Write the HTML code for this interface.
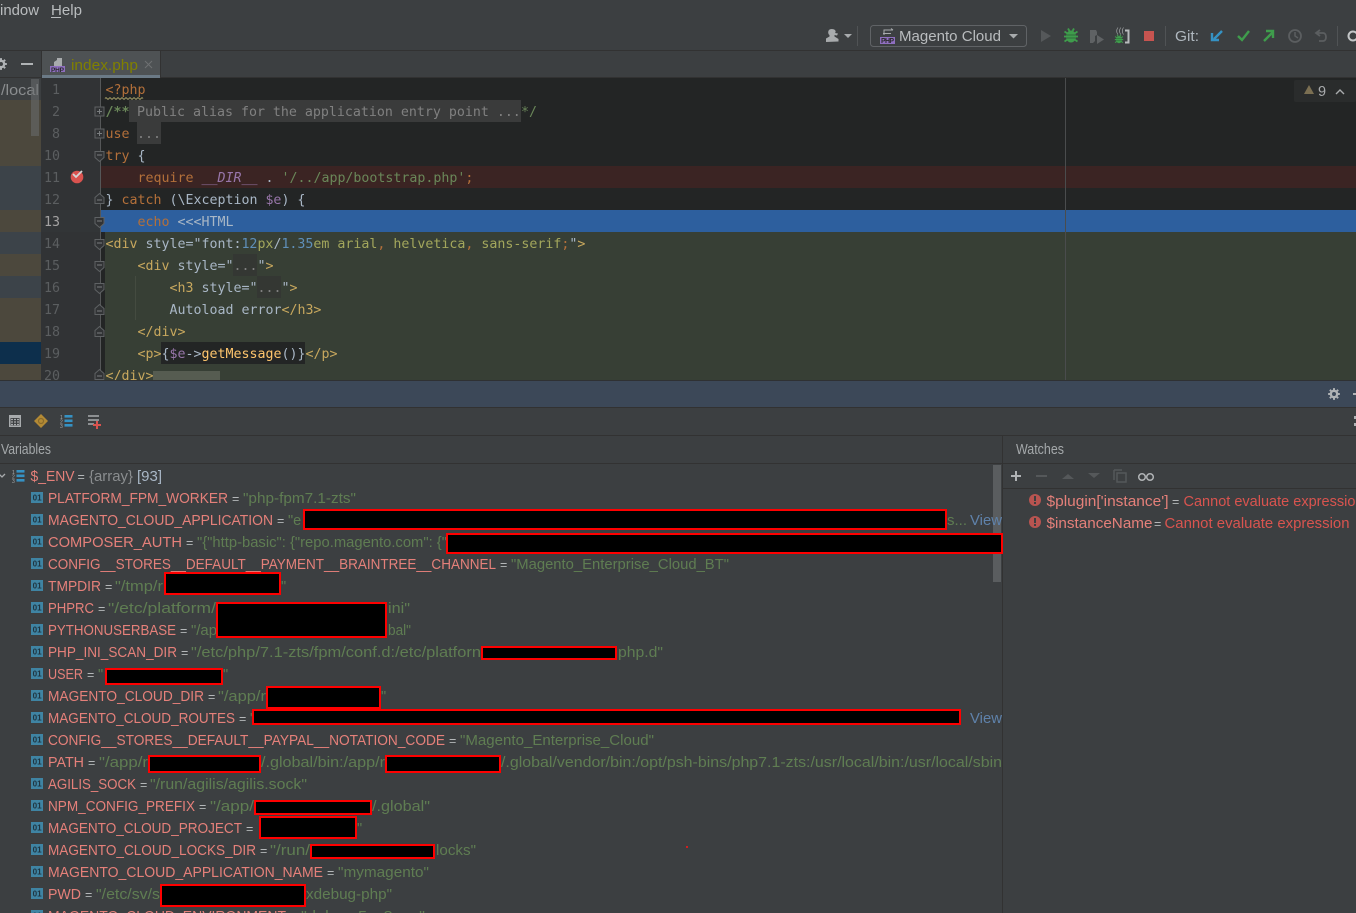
<!DOCTYPE html>
<html><head><meta charset="utf-8"><style>
html,body{margin:0;padding:0;background:#3c3f41;width:1356px;height:913px;overflow:hidden}
svg{display:block}
text{white-space:pre}
.u{font-family:"Liberation Sans",sans-serif;font-size:14.5px}
.m{font-family:"DejaVu Sans Mono","Liberation Mono",monospace;font-size:13.29px;fill:#a9b7c6}
.n{fill:#e5807a}.e{fill:#b4b7b9;font-size:12.5px}.v{fill:#5f7d52}.g{fill:#8a8d8f}.l{fill:#5f82ab}
.o{fill:#b4703a}.t{fill:#c8a85e}.y{fill:#a9b7c6}.p{fill:#9876aa}.s{fill:#6a8759}.b{fill:#5f8fb8}.c{fill:#5d6a5d}.h{fill:#a3a75c}
.ln{font-family:"DejaVu Sans Mono",monospace;font-size:13.29px;fill:#5b5e60;text-anchor:end}
.ic{font-family:"Liberation Sans",sans-serif;font-size:8px;font-weight:bold;fill:#1f3440}
.d{font-family:"Liberation Sans",sans-serif;font-size:5px;fill:#a8abad}
</style></head><body>
<svg width="1356" height="913" viewBox="0 0 1356 913" xmlns="http://www.w3.org/2000/svg">
<defs>
<g id="i01"><rect width="12" height="11" fill="#3f84a3"/><text class="ic" x="1.6" y="8.4" textLength="9" lengthAdjust="spacingAndGlyphs">01</text></g>
<g id="list"><text class="d" x="0" y="4">1</text><text class="d" x="0" y="8.500">2</text><text class="d" x="0" y="13">3</text><rect x="4.500" y="0" width="8" height="2.600" fill="#3592c4"/><rect x="4.500" y="4.500" width="8" height="2.600" fill="#3592c4"/><rect x="4.500" y="9" width="8" height="2.600" fill="#3592c4"/></g>
<g id="bug"><path d="M-6.500-4l3 2M6.500-4l-3 2M-7 1h3M7 1h-3M-6.500 6l3-2M6.500 6l-3-2M-3-7l1.500 2.500M3-7l-1.500 2.500" stroke="#3f9c4c" stroke-width="1.800" fill="none"/><ellipse cx="0" cy="1" rx="5" ry="6" fill="#3f9c4c"/><path d="M-4.500-.5h9M-4.500 2.500h9" stroke="#2f6b3a" stroke-width="1"/></g>
<g id="fm"><rect x="-4.500" y="-4.500" width="9" height="9" fill="#3c3f41" stroke="#5a5d5f"/><path d="M-2.500 0h5" stroke="#6d7072"/></g>
<g id="fp"><rect x="-4.500" y="-4.500" width="9" height="9" fill="#313335" stroke="#5f6264"/><path d="M-2.500 0h5M0-2.500v5" stroke="#7a7d7f"/></g>
<g id="fd"><path d="M-4.500-4.500h9v6l-4.500 4-4.500-4z" fill="#313335" stroke="#5f6264"/><path d="M-2.500-1h5" stroke="#7a7d7f"/></g>
<g id="fu"><path d="M-4.500 4.500h9v-6l-4.500-4-4.500 4z" fill="#313335" stroke="#5f6264"/><path d="M-2.500 1h5" stroke="#7a7d7f"/></g>
<g id="gear"><circle r="3.500" fill="none" stroke="#b0b3b5" stroke-width="2.600"/><path d="M0-6.500v2.500M0 6.500v-2.500M-6.500 0h2.500M6.500 0h-2.500M-4.600-4.600l1.800 1.800M4.600 4.600l-1.800-1.800M-4.600 4.600l1.800-1.800M4.600-4.600l-1.800 1.800" stroke="#b0b3b5" stroke-width="2.200"/></g>
</defs>

<!-- window chrome -->
<rect width="1356" height="913" fill="#3c3f41"/>
<rect y="50" width="1356" height="1" fill="#323232"/>
<text class="u" x="0" y="15" fill="#b9bcbe" textLength="39" lengthAdjust="spacingAndGlyphs">indow</text>
<text class="u" x="51" y="15" fill="#b9bcbe" textLength="31" lengthAdjust="spacingAndGlyphs">Help</text>
<rect x="51" y="17" width="10" height="1" fill="#b9bcbe"/>

<!-- toolbar -->
<path d="M826 42v-3.500l3.500-2v-1.500c-2-1-2-6 2-6s5 2.500 3.500 4l3 .5-1 2-2.500-.5v1.500l4 2.500v2.500z" fill="#a8abad"/><path d="M844 34h8l-4 4z" fill="#a8abad"/>
<rect x="857" y="26" width="1" height="20" fill="#505355"/>
<rect x="870.500" y="25.500" width="156" height="21" rx="3" fill="none" stroke="#606366"/>
<path d="M884 35v-5h9M893 30l-2-1.500M883 33.500h8" stroke="#a8abad" fill="none"/><rect x="880" y="37" width="15" height="7" fill="#8f6fc0"/>
<text x="881" y="43" font-family="Liberation Sans" font-size="7" font-weight="bold" fill="#2b2b2b" textLength="13">PHP</text>
<text class="u" x="899" y="41" fill="#b9bcbe" textLength="102" lengthAdjust="spacingAndGlyphs">Magento Cloud</text>
<path d="M1009 34h9l-4.500 4.500z" fill="#a8abad"/>
<path d="M1041 30l10 6-10 6z" fill="#55585a"/>
<use href="#bug" x="1071" y="35.500"/>
<path d="M1090 30h6l1 2v3l-2 1v5l-2 2h-3z" fill="#5f6264"/><path d="M1097 35l7 4.500-7 4.500z" fill="#5f6264"/>
<use href="#bug" transform="translate(1119,39) scale(.6)"/><path d="M1125 30.500h3.500v12h-3.500" fill="none" stroke="#b8bbbd" stroke-width="2"/><text x="1116" y="33" font-family="Liberation Sans" font-size="7" fill="#b0b3b5" textLength="8">(((</text>
<rect x="1144" y="31" width="10" height="10" fill="#c75450"/>
<rect x="1165" y="26" width="1" height="20" fill="#505355"/>
<text class="u" x="1175" y="41" fill="#b0b8bf" textLength="24" lengthAdjust="spacingAndGlyphs">Git:</text>
<path d="M1222 31l-8 8M1212 33v7h7" fill="none" stroke="#3592c4" stroke-width="2.400"/>
<path d="M1238 36l4 4 7-9" fill="none" stroke="#3f9c4c" stroke-width="2.400"/>
<path d="M1264 41l9-9M1266 31h7v7" fill="none" stroke="#3f9c4c" stroke-width="2.400"/>
<circle cx="1295" cy="36" r="6" fill="none" stroke="#5b5e60" stroke-width="1.800"/><path d="M1295 32v4l3 2" fill="none" stroke="#5b5e60" stroke-width="1.500"/>
<path d="M1320 30l-4 3 4 3M1317 33h6c4 0 4 8 0 8h-4" fill="none" stroke="#5b5e60" stroke-width="1.800"/>
<rect x="1337" y="26" width="1" height="20" fill="#505355"/>
<circle cx="1353" cy="36" r="4.500" fill="none" stroke="#c4c6c8" stroke-width="2"/>

<!-- tab strip -->
<rect y="77" width="1356" height="1" fill="#323232"/>
<use href="#gear" transform="translate(1,64) scale(.9)"/>
<rect x="21" y="63" width="12" height="2" fill="#b0b3b5"/>
<rect x="41" y="51" width="119" height="27" fill="#4e5254"/>
<rect x="41" y="75" width="119" height="3" fill="#6b7a86"/>
<rect x="41" y="51" width="1" height="27" fill="#323232"/><rect x="160" y="51" width="1" height="27" fill="#323232"/>
<path d="M54 66v-4l3-2v-2h5v8z" fill="#a8abad"/><rect x="50" y="66" width="15" height="6" fill="#8f6fc0"/>
<text x="51" y="72" font-family="Liberation Sans" font-size="6.500" font-weight="bold" fill="#2b2b2b" textLength="13">PHP</text>
<text class="u" x="71" y="70" fill="#808000" textLength="67" lengthAdjust="spacingAndGlyphs">index.php</text>
<path d="M145 61l7 7M152 61l-7 7" stroke="#6e7072" stroke-width="1"/>

<!-- project panel -->
<rect y="78" width="41" height="302" fill="#3c3f41"/>
<text class="u" x="1" y="95" fill="#8a8d8f" textLength="38" lengthAdjust="spacingAndGlyphs">/local</text>
<rect y="100" width="41" height="66" fill="#4c483d"/>
<rect y="166" width="41" height="44" fill="#3c4349"/>
<rect y="210" width="41" height="22" fill="#4c483d"/>
<rect y="232" width="41" height="22" fill="#3c4349"/>
<rect y="254" width="41" height="22" fill="#4c483d"/>
<rect y="276" width="41" height="22" fill="#3c4349"/>
<rect y="298" width="41" height="44" fill="#4c483d"/>
<rect y="342" width="41" height="22" fill="#0d2f4c"/>
<rect y="364" width="41" height="16" fill="#4c483d"/>
<rect x="31" y="79" width="8" height="57" fill="#6a6d6f" fill-opacity=".55"/>

<!-- gutter + editor -->
<rect x="41" y="78" width="59" height="302" fill="#313335"/>
<rect x="100" y="78" width="1256" height="302" fill="#232525"/>
<rect x="100" y="166" width="1256" height="22" fill="#3b2423"/>
<rect x="105" y="232" width="1251" height="148" fill="#373f35"/>
<rect x="100" y="210" width="1256" height="22" fill="#2d5f9e"/>
<rect x="41" y="210" width="59" height="22" fill="#323537"/>
<rect x="100" y="78" width="1" height="302" fill="#555758"/>
<rect x="1065" y="78" width="1" height="302" fill="#4a4c4d"/>

<!-- line numbers -->
<text class="ln" x="60" y="94">1</text><text class="ln" x="60" y="116">2</text><text class="ln" x="60" y="138">8</text>
<text class="ln" x="60" y="160">10</text><text class="ln" x="60" y="182">11</text><text class="ln" x="60" y="204">12</text>
<text class="ln" x="60" y="226" style="fill:#a4a3a3">13</text><text class="ln" x="60" y="248">14</text><text class="ln" x="60" y="270">15</text>
<text class="ln" x="60" y="292">16</text><text class="ln" x="60" y="314">17</text><text class="ln" x="60" y="336">18</text>
<text class="ln" x="60" y="358">19</text><text class="ln" x="60" y="380">20</text>

<!-- fold markers -->
<use href="#fp" x="99.500" y="111.500"/><use href="#fp" x="99.500" y="133.500"/><use href="#fd" x="99.500" y="156"/><use href="#fu" x="99.500" y="199"/>
<use href="#fd" x="99.500" y="222"/><use href="#fd" x="99.500" y="244"/><use href="#fd" x="99.500" y="266"/><use href="#fd" x="99.500" y="288"/>
<use href="#fu" x="99.500" y="310"/><use href="#fu" x="99.500" y="332"/><use href="#fu" x="99.500" y="375"/>

<!-- breakpoint -->
<circle cx="77" cy="177" r="6.300" fill="#d9534f"/><path d="M73 174l3 3 6-6" fill="none" stroke="#d5d5d5" stroke-width="1.800"/>

<!-- code fold backgrounds -->
<rect x="129" y="100" width="392" height="22" fill="#3a3b3b"/>
<rect x="137" y="122" width="24" height="22" fill="#3a3b3b"/>
<rect x="233" y="254" width="24" height="22" fill="#343733"/>
<rect x="257" y="276" width="24" height="22" fill="#343733"/>
<rect x="161" y="342" width="144" height="22" fill="#232525"/>
<rect x="153" y="371" width="67" height="9" fill="#565c51"/>
<rect x="135" y="276" width="1" height="44" fill="#444b40"/>
<path d="M105 98.500q1-1.500 2 0t2 0 2 0 2 0 2 0 2 0 2 0 2 0 2 0 2 0 2 0 2 0 2 0 2 0 2 0 2 0 2 0 2 0 2 0" fill="none" stroke="#a8a36a" stroke-width="1"/>

<!-- code -->
<text class="m" x="105.500" y="94"><tspan class="o">&lt;?php</tspan></text>
<text class="m" x="105.500" y="116"><tspan class="s" font-weight="bold">/**</tspan></text>
<text class="m" x="137" y="116" style="fill:#808080">Public alias for the application entry point ...</text>
<text class="m" x="521" y="116"><tspan class="s">*/</tspan></text>
<text class="m" x="105.500" y="138"><tspan class="o">use</tspan></text><text class="m" x="137" y="138" style="fill:#808080">...</text>
<text class="m" x="105.500" y="160"><tspan class="o">try</tspan> {</text>
<text class="m" x="137.500" y="182"><tspan class="o">require</tspan> <tspan class="p" font-style="italic">__DIR__</tspan> . <tspan class="s">'/../app/bootstrap.php'</tspan><tspan class="o">;</tspan></text>
<text class="m" x="105.500" y="204">} <tspan class="o">catch</tspan> (\Exception <tspan class="p">$e</tspan>) {</text>
<text class="m" x="137.500" y="226"><tspan class="o">echo</tspan> &lt;&lt;&lt;HTML</text>
<text class="m" x="105.500" y="248"><tspan class="t">&lt;div</tspan> <tspan class="y">style="font:</tspan><tspan class="b">12</tspan><tspan class="h">px</tspan><tspan class="y">/</tspan><tspan class="b">1.35</tspan><tspan class="h">em arial</tspan><tspan class="o">,</tspan><tspan class="h"> helvetica</tspan><tspan class="o">,</tspan><tspan class="h"> sans-serif</tspan><tspan class="o">;</tspan><tspan class="y">"</tspan><tspan class="t">&gt;</tspan></text>
<text class="m" x="137.500" y="270"><tspan class="t">&lt;div</tspan> <tspan class="y">style="</tspan><tspan style="fill:#808080">...</tspan><tspan class="y">"</tspan><tspan class="t">&gt;</tspan></text>
<text class="m" x="169.500" y="292"><tspan class="t">&lt;h3</tspan> <tspan class="y">style="</tspan><tspan style="fill:#808080">...</tspan><tspan class="y">"</tspan><tspan class="t">&gt;</tspan></text>
<text class="m" x="169.500" y="314">Autoload error<tspan class="t">&lt;/h3&gt;</tspan></text>
<text class="m" x="137.500" y="336"><tspan class="t">&lt;/div&gt;</tspan></text>
<text class="m" x="137.500" y="358"><tspan class="t">&lt;p&gt;</tspan>{<tspan class="p">$e</tspan>-&gt;<tspan style="fill:#ffc66d">getMessage</tspan>()}<tspan class="t">&lt;/p&gt;</tspan></text>
<text class="m" x="105.500" y="380"><tspan class="t">&lt;/div&gt;</tspan></text>

<!-- inspection widget -->
<rect x="1294" y="80" width="62" height="22" rx="2" fill="#2a2c2c"/>
<path d="M1309 85l5 9h-10z" fill="#7b6f52"/>
<text class="u" x="1318" y="96" fill="#a9abad" font-size="13">9</text>
<path d="M1336 94l4-4 4 4" fill="none" stroke="#a9abad" stroke-width="1.400"/>

<!-- debug title bar -->
<rect y="380" width="1356" height="1" fill="#2f3133"/>
<rect y="381" width="1356" height="26" fill="#3c4858"/>
<rect y="407" width="1356" height="1" fill="#323232"/>
<use href="#gear" transform="translate(1334,394) scale(.9)"/>
<rect x="1353" y="393" width="3" height="2" fill="#b0b3b5"/>

<!-- debug toolbar -->
<rect y="435" width="1356" height="1" fill="#323232"/>
<rect x="9" y="415" width="12" height="12" fill="#a8abad"/><rect x="10.500" y="418" width="9" height="7.500" fill="#3c3f41"/><path d="M11 419.500h2M14 419.500h2M17 419.500h2M11 422h2M14 422h2M17 422h2M11 424.500h2M14 424.500h2M17 424.500h2" stroke="#a8abad" stroke-width="1.200"/>
<path d="M41 414l7 7-7 7-7-7z" fill="#b38a35"/><circle cx="41" cy="421" r="2.500" fill="none" stroke="#8a6b2a" stroke-width="1.200"/>
<use href="#list" x="60" y="415"/>
<path d="M88 416h11M88 420h11M88 424h6" stroke="#a8abad" stroke-width="1.500"/><path d="M97 421v8M93 425h8" stroke="#d9534f" stroke-width="2"/>
<rect x="1354" y="416" width="2" height="3" fill="#b0b3b5"/><rect x="1354" y="423" width="2" height="3" fill="#b0b3b5"/>

<!-- panels -->
<text class="u" x="1" y="454" fill="#a4a8aa" font-size="13" textLength="50" lengthAdjust="spacingAndGlyphs">Variables</text>
<text class="u" x="1016" y="454" fill="#a4a8aa" font-size="13" textLength="48" lengthAdjust="spacingAndGlyphs">Watches</text>
<rect y="463" width="1356" height="1" fill="#323232"/>
<rect x="1002" y="436" width="1" height="477" fill="#323232"/>
<rect x="993" y="465" width="8" height="117" fill="#5a5d5f"/>

<!-- watches -->
<path d="M1016 471v10M1011 476h10" stroke="#b0b3b5" stroke-width="2"/>
<rect x="1036" y="475" width="11" height="2" fill="#55585a"/>
<path d="M1062 479l6-5 6 5z" fill="#55585a"/><path d="M1088 473l6 5 6-5z" fill="#55585a"/>
<path d="M1114 470h8M1114 470v10" stroke="#55585a" stroke-width="1.500"/><rect x="1117" y="473" width="9" height="9" fill="none" stroke="#55585a" stroke-width="1.500"/>
<circle cx="1142" cy="477" r="3.300" fill="none" stroke="#b0b3b5" stroke-width="1.500"/><circle cx="1150" cy="477" r="3.300" fill="none" stroke="#b0b3b5" stroke-width="1.500"/>
<rect x="1003" y="488" width="353" height="1" fill="#323232"/>
<circle cx="1035" cy="500" r="6" fill="#b75450"/><rect x="1034" y="496" width="2" height="5" fill="#3c3f41"/><rect x="1034" y="502" width="2" height="2" fill="#3c3f41"/>
<circle cx="1035" cy="522" r="6" fill="#b75450"/><rect x="1034" y="518" width="2" height="5" fill="#3c3f41"/><rect x="1034" y="524" width="2" height="2" fill="#3c3f41"/>
<text class="u n" x="1046.500" y="506" textLength="122" lengthAdjust="spacingAndGlyphs">$plugin['instance']</text>
<text class="u e" x="1172" y="506">=</text>
<text class="u" x="1183.500" y="506" fill="#d9544f" textLength="180" lengthAdjust="spacingAndGlyphs">Cannot evaluate expression</text>
<text class="u n" x="1046.500" y="528" textLength="106" lengthAdjust="spacingAndGlyphs">$instanceName</text>
<text class="u e" x="1154" y="528">=</text>
<text class="u" x="1164.500" y="528" fill="#d9544f" textLength="185" lengthAdjust="spacingAndGlyphs">Cannot evaluate expression</text>

<!-- variables tree -->
<path d="M-1 474l3 3 3-3" fill="none" stroke="#a8abad" stroke-width="1.300"/>
<use href="#list" x="12" y="470"/>
<text class="u n" x="30.500" y="481" textLength="44" lengthAdjust="spacingAndGlyphs">$_ENV</text>
<text class="u e" x="77.500" y="481">=</text>
<text class="u g" x="89" y="481" textLength="44" lengthAdjust="spacingAndGlyphs">{array}</text>
<text class="u" x="137" y="481" fill="#a9b7c6" textLength="25" lengthAdjust="spacingAndGlyphs">[93]</text>

<use href="#i01" x="31" y="492"/><text class="u n" x="48" y="503" textLength="180" lengthAdjust="spacingAndGlyphs">PLATFORM_FPM_WORKER</text><text class="u e" x="232" y="503">=</text><text class="u v" x="243" y="503" textLength="113" lengthAdjust="spacingAndGlyphs">"php-fpm7.1-zts"</text>

<use href="#i01" x="31" y="514"/><text class="u n" x="48" y="525" textLength="225" lengthAdjust="spacingAndGlyphs">MAGENTO_CLOUD_APPLICATION</text><text class="u e" x="277" y="525">=</text><text class="u v" x="288" y="525">"e</text><text class="u v" x="947" y="525" textLength="20" lengthAdjust="spacingAndGlyphs">s...</text><text class="u l" x="970" y="525" textLength="32" lengthAdjust="spacingAndGlyphs">View</text>

<use href="#i01" x="31" y="536"/><text class="u n" x="48" y="547" textLength="134" lengthAdjust="spacingAndGlyphs">COMPOSER_AUTH</text><text class="u e" x="186" y="547">=</text><text class="u v" x="197" y="547" textLength="250" lengthAdjust="spacingAndGlyphs">"{"http-basic": {"repo.magento.com": {"</text>

<use href="#i01" x="31" y="558"/><text class="u n" x="48" y="569" textLength="448" lengthAdjust="spacingAndGlyphs">CONFIG__STORES__DEFAULT__PAYMENT__BRAINTREE__CHANNEL</text><text class="u e" x="500" y="569">=</text><text class="u v" x="511" y="569" textLength="218" lengthAdjust="spacingAndGlyphs">"Magento_Enterprise_Cloud_BT"</text>

<use href="#i01" x="31" y="580"/><text class="u n" x="48" y="591" textLength="53" lengthAdjust="spacingAndGlyphs">TMPDIR</text><text class="u e" x="105" y="591">=</text><text class="u v" x="115" y="591" textLength="48" lengthAdjust="spacingAndGlyphs">"/tmp/r</text><text class="u v" x="281" y="591">"</text>

<use href="#i01" x="31" y="602"/><text class="u n" x="48" y="613" textLength="46" lengthAdjust="spacingAndGlyphs">PHPRC</text><text class="u e" x="98" y="613">=</text><text class="u v" x="108" y="613" textLength="108" lengthAdjust="spacingAndGlyphs">"/etc/platform/</text><text class="u v" x="388" y="613" textLength="22" lengthAdjust="spacingAndGlyphs">ini"</text>

<use href="#i01" x="31" y="624"/><text class="u n" x="48" y="635" textLength="128" lengthAdjust="spacingAndGlyphs">PYTHONUSERBASE</text><text class="u e" x="180" y="635">=</text><text class="u v" x="191" y="635" textLength="26" lengthAdjust="spacingAndGlyphs">"/ap</text><text class="u v" x="388" y="635" textLength="23" lengthAdjust="spacingAndGlyphs">bal"</text>

<use href="#i01" x="31" y="646"/><text class="u n" x="48" y="657" textLength="129" lengthAdjust="spacingAndGlyphs">PHP_INI_SCAN_DIR</text><text class="u e" x="181" y="657">=</text><text class="u v" x="191" y="657" textLength="290" lengthAdjust="spacingAndGlyphs">"/etc/php/7.1-zts/fpm/conf.d:/etc/platforn</text><text class="u v" x="618" y="657" textLength="45" lengthAdjust="spacingAndGlyphs">php.d"</text>

<use href="#i01" x="31" y="668"/><text class="u n" x="48" y="679" textLength="35" lengthAdjust="spacingAndGlyphs">USER</text><text class="u e" x="87" y="679">=</text><text class="u v" x="98" y="679">"</text><text class="u v" x="223" y="679">"</text>

<use href="#i01" x="31" y="690"/><text class="u n" x="48" y="701" textLength="156" lengthAdjust="spacingAndGlyphs">MAGENTO_CLOUD_DIR</text><text class="u e" x="208" y="701">=</text><text class="u v" x="218" y="701" textLength="48" lengthAdjust="spacingAndGlyphs">"/app/r</text><text class="u v" x="381" y="701">"</text>

<use href="#i01" x="31" y="712"/><text class="u n" x="48" y="723" textLength="187" lengthAdjust="spacingAndGlyphs">MAGENTO_CLOUD_ROUTES</text><text class="u e" x="239" y="723">=</text><text class="u v" x="250" y="723">"</text><text class="u l" x="970" y="723" textLength="32" lengthAdjust="spacingAndGlyphs">View</text>

<use href="#i01" x="31" y="734"/><text class="u n" x="48" y="745" textLength="397" lengthAdjust="spacingAndGlyphs">CONFIG__STORES__DEFAULT__PAYPAL__NOTATION_CODE</text><text class="u e" x="449" y="745">=</text><text class="u v" x="460" y="745" textLength="194" lengthAdjust="spacingAndGlyphs">"Magento_Enterprise_Cloud"</text>

<use href="#i01" x="31" y="756"/><text class="u n" x="48" y="767" textLength="36" lengthAdjust="spacingAndGlyphs">PATH</text><text class="u e" x="88" y="767">=</text><text class="u v" x="99" y="767" textLength="49" lengthAdjust="spacingAndGlyphs">"/app/r</text><text class="u v" x="261" y="767" textLength="124" lengthAdjust="spacingAndGlyphs">/.global/bin:/app/r</text><text class="u v" x="501" y="767" textLength="501" lengthAdjust="spacingAndGlyphs">/.global/vendor/bin:/opt/psh-bins/php7.1-zts:/usr/local/bin:/usr/local/sbin</text>

<use href="#i01" x="31" y="778"/><text class="u n" x="48" y="789" textLength="88" lengthAdjust="spacingAndGlyphs">AGILIS_SOCK</text><text class="u e" x="140" y="789">=</text><text class="u v" x="150" y="789" textLength="157" lengthAdjust="spacingAndGlyphs">"/run/agilis/agilis.sock"</text>

<use href="#i01" x="31" y="800"/><text class="u n" x="48" y="811" textLength="147" lengthAdjust="spacingAndGlyphs">NPM_CONFIG_PREFIX</text><text class="u e" x="199" y="811">=</text><text class="u v" x="210" y="811" textLength="44" lengthAdjust="spacingAndGlyphs">"/app/</text><text class="u v" x="372" y="811" textLength="58" lengthAdjust="spacingAndGlyphs">/.global"</text>

<use href="#i01" x="31" y="822"/><text class="u n" x="48" y="833" textLength="194" lengthAdjust="spacingAndGlyphs">MAGENTO_CLOUD_PROJECT</text><text class="u e" x="246" y="833">=</text><text class="u v" x="357" y="833">"</text>

<use href="#i01" x="31" y="844"/><text class="u n" x="48" y="855" textLength="208" lengthAdjust="spacingAndGlyphs">MAGENTO_CLOUD_LOCKS_DIR</text><text class="u e" x="260" y="855">=</text><text class="u v" x="270" y="855" textLength="40" lengthAdjust="spacingAndGlyphs">"/run/</text><text class="u v" x="436" y="855" textLength="40" lengthAdjust="spacingAndGlyphs">locks"</text>

<use href="#i01" x="31" y="866"/><text class="u n" x="48" y="877" textLength="275" lengthAdjust="spacingAndGlyphs">MAGENTO_CLOUD_APPLICATION_NAME</text><text class="u e" x="327" y="877">=</text><text class="u v" x="338" y="877" textLength="91" lengthAdjust="spacingAndGlyphs">"mymagento"</text>

<use href="#i01" x="31" y="888"/><text class="u n" x="48" y="899" textLength="33" lengthAdjust="spacingAndGlyphs">PWD</text><text class="u e" x="85" y="899">=</text><text class="u v" x="96" y="899" textLength="64" lengthAdjust="spacingAndGlyphs">"/etc/sv/s</text><text class="u v" x="306" y="899" textLength="86" lengthAdjust="spacingAndGlyphs">xdebug-php"</text>

<use href="#i01" x="31" y="910"/><text class="u n" x="48" y="921" textLength="238" lengthAdjust="spacingAndGlyphs">MAGENTO_CLOUD_ENVIRONMENT</text><text class="u e" x="290" y="921">=</text><text class="u v" x="301" y="921" textLength="124" lengthAdjust="spacingAndGlyphs">"debug-5xc8gsq"</text>

<!-- redactions -->
<g fill="#000" stroke="#f00" stroke-width="2">
<rect x="304" y="510" width="642" height="19"/>
<rect x="447" y="534" width="555" height="19"/>
<rect x="165" y="573" width="115" height="21"/>
<rect x="217" y="603" width="169" height="34"/>
<rect x="482" y="647" width="134" height="12"/>
<rect x="106" y="669" width="116" height="15"/>
<rect x="267" y="687" width="113" height="21"/>
<rect x="253" y="710" width="707" height="14"/>
<rect x="149" y="756" width="111" height="16"/>
<rect x="386" y="756" width="114" height="16"/>
<rect x="255" y="801" width="116" height="13"/>
<rect x="260" y="817" width="96" height="21"/>
<rect x="311" y="845" width="123" height="13"/>
<rect x="161" y="885" width="144" height="21"/>
</g>
<rect x="686" y="846" width="2" height="2" fill="#d02020"/>
</svg>
</body></html>
